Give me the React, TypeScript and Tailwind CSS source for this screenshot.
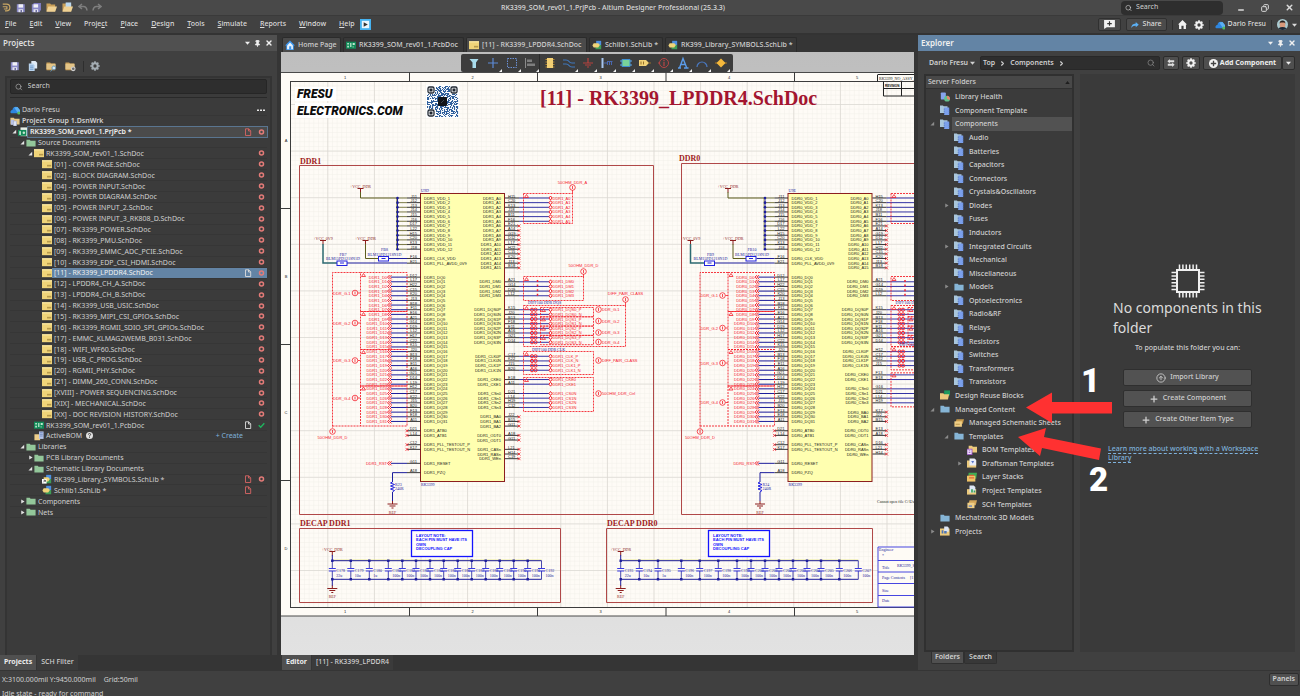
import React from 'react';
import { ArrowUpCircle, ChevronRight, Copy, Minus, Pin, Plus, Search, X } from 'lucide-react';

type IconKind =
  | 'cloud' | 'group' | 'pcbProject' | 'greenFolder' | 'sheet' | 'pcb' | 'bom' | 'schlib' | 'schlibLink'
  | 'health' | 'comp' | 'blueFolder' | 'reuse' | 'sheets' | 'bomTpl' | 'draftsman' | 'layers' | 'projTpl' | 'schTpl' | 'projects' | 'home';

type ProjectRow = {
  label: string;
  level: number;
  icon: IconKind;
  open?: boolean;
  doc?: 'red' | 'white';
  mark?: 'ring' | 'check' | 'dots';
  bold?: boolean;
  state?: 'focused' | 'selected';
};

const sheet = (label: string): ProjectRow => ({ label, level: 4, icon: 'sheet', mark: 'ring' });

const projectRows: ProjectRow[] = [
  { label: 'Dario Fresu', level: 0, icon: 'cloud', mark: 'dots' },
  { label: 'Project Group 1.DsnWrk', level: 0, icon: 'group', bold: true },
  { label: 'RK3399_SOM_rev01_1.PrjPcb *', level: 1, icon: 'pcbProject', open: true, doc: 'red', mark: 'ring', bold: true, state: 'focused' },
  { label: 'Source Documents', level: 2, icon: 'greenFolder', open: true },
  { label: 'RK3399_SOM_rev01_1.SchDoc', level: 3, icon: 'sheet', open: true, mark: 'ring' },
  sheet('[01] - COVER PAGE.SchDoc'),
  sheet('[02] - BLOCK DIAGRAM.SchDoc'),
  sheet('[04] - POWER INPUT.SchDoc'),
  sheet('[03] - POWER DIAGRAM.SchDoc'),
  sheet('[05] - POWER INPUT_2.SchDoc'),
  sheet('[06] - POWER INPUT_3_RK808_D.SchDoc'),
  sheet('[07] - RK3399_POWER.SchDoc'),
  sheet('[08] - RK3399_PMU.SchDoc'),
  sheet('[09] - RK3399_EMMC_ADC_PCIE.SchDoc'),
  sheet('[10] - RK3399_EDP_CSI_HDMI.SchDoc'),
  { ...sheet('[11] - RK3399_LPDDR4.SchDoc'), doc: 'white', state: 'selected' },
  sheet('[12] - LPDDR4_CH_A.SchDoc'),
  sheet('[13] - LPDDR4_CH_B.SchDoc'),
  sheet('[14] - RK3399_USB_USIC.SchDoc'),
  sheet('[15] - RK3399_MIPI_CSI_GPIOs.SchDoc'),
  sheet('[16] - RK3399_RGMII_SDIO_SPI_GPIOs.SchDoc'),
  sheet('[17] - EMMC_KLMAG2WEMB_B031.SchDoc'),
  sheet('[18] - WIFI_WF60.SchDoc'),
  sheet('[19] - USB_C_PROG.SchDoc'),
  sheet('[20] - RGMII_PHY.SchDoc'),
  sheet('[21] - DIMM_260_CONN.SchDoc'),
  sheet('[XVIII] - POWER SEQUENCING.SchDoc'),
  sheet('[XIX] - MECHANICAL.SchDoc'),
  sheet('[XX] - DOC REVISION HISTORY.SchDoc'),
  { label: 'RK3399_SOM_rev01_1.PcbDoc', level: 3, icon: 'pcb', doc: 'white', mark: 'check' },
  { label: 'ActiveBOM', level: 3, icon: 'bom' },
  { label: 'Libraries', level: 2, icon: 'greenFolder', open: true },
  { label: 'PCB Library Documents', level: 3, icon: 'greenFolder', open: false },
  { label: 'Schematic Library Documents', level: 3, icon: 'greenFolder', open: true },
  { label: 'RK399_Library_SYMBOLS.SchLib *', level: 4, icon: 'schlibLink', doc: 'red', mark: 'ring' },
  { label: 'Schlib1.SchLib *', level: 4, icon: 'schlib', doc: 'red' },
  { label: 'Components', level: 2, icon: 'greenFolder', open: false },
  { label: 'Nets', level: 2, icon: 'greenFolder', open: false },
];

type FolderRow = { label: string; level: number; icon: IconKind; open?: boolean; active?: boolean };

const comp = (label: string): FolderRow => ({ label, level: 1, icon: 'comp' });

const folderRows: FolderRow[] = [
  { label: 'Library Health', level: 0, icon: 'health' },
  { label: 'Component Template', level: 0, icon: 'comp' },
  { label: 'Components', level: 0, icon: 'comp', open: true, active: true },
  comp('Audio'),
  comp('Batteries'),
  comp('Capacitors'),
  comp('Connectors'),
  comp('Crystals&Oscillators'),
  { ...comp('Diodes'), open: false },
  comp('Fuses'),
  comp('Inductors'),
  { ...comp('Integrated Circuits'), open: false },
  comp('Mechanical'),
  comp('Miscellaneous'),
  { label: 'Models', level: 1, icon: 'blueFolder', open: false },
  comp('Optoelectronics'),
  comp('Radio&RF'),
  comp('Relays'),
  comp('Resistors'),
  comp('Switches'),
  comp('Transformers'),
  comp('Transistors'),
  { label: 'Design Reuse Blocks', level: 0, icon: 'reuse' },
  { label: 'Managed Content', level: 0, icon: 'blueFolder', open: true },
  { label: 'Managed Schematic Sheets', level: 1, icon: 'sheets' },
  { label: 'Templates', level: 1, icon: 'blueFolder', open: true },
  { label: 'BOM Templates', level: 2, icon: 'bomTpl' },
  { label: 'Draftsman Templates', level: 2, icon: 'draftsman', open: false },
  { label: 'Layer Stacks', level: 2, icon: 'layers' },
  { label: 'Project Templates', level: 2, icon: 'projTpl' },
  { label: 'SCH Templates', level: 2, icon: 'schTpl' },
  { label: 'Mechatronic 3D Models', level: 0, icon: 'blueFolder' },
  { label: 'Projects', level: 0, icon: 'projects', open: false },
];

/* ---------- small icons ---------- */

const folderPath = 'M0.5 2h4l1 1.2h6v7h-11z';

const TreeIcon = ({ kind }: { kind: IconKind }) => {
  const art: Record<IconKind, React.ReactNode> = {
    cloud: (
      <>
        <path d="M0.500 8.500c0-2 1.600-2.600 2.400-2.600C3.200 3.400 5 2 7 2c2.400 0 3.600 2 3.600 3.600 1 .3 1.400 1.400 1.400 2.200 0 1.400-1 2.200-2.200 2.200H2.200C1.200 10 .5 9.400.5 8.500z" fill="#2d86e0" />
        <path d="M5 3l4 6h3V6l-3-3.500z" fill="#5cb0f2" />
        <circle cx="10.500" cy="9.700" r="1.800" fill="#55b960" />
      </>
    ),
    group: (
      <>
        <path d={folderPath} fill="#e8c988" />
        <rect x="1" y="4.500" width="4" height="6" fill="#b9c2e6" />
        <rect x="4" y="6" width="4" height="6" fill="#dfe4f4" stroke="#8a93b5" strokeWidth=".5" />
      </>
    ),
    pcbProject: (
      <>
        <rect x="3" y="0.500" width="8.500" height="10.500" fill="#e8efe9" />
        <rect x="0" y="3.500" width="10" height="7" fill="#128a58" />
        <rect x="1.500" y="5" width="2" height="4.500" fill="#c5e6d2" />
        <circle cx="7" cy="7" r="1.500" fill="#c5e6d2" />
      </>
    ),
    greenFolder: <path d={folderPath} fill="#93c79a" />,
    sheet: (
      <>
        <rect x="0" y="1.500" width="12" height="9.500" fill="#f0d479" />
        <path d="M0 1.500h12v1.500H0z" fill="#f9e7a4" />
        <rect x="6" y="7" width="5" height="2" fill="#b79a4c" />
      </>
    ),
    pcb: (
      <>
        <rect x="0" y="2" width="12" height="8.500" fill="#128a58" />
        <path d="M1.500 3.500h2v2h-2zM1.500 7h2v2h-2zM5 3.500h1.500v5H5zM8 3.500h2.500v2.500H8zM8 7.500h1v1.500H8z" fill="#bfe8cf" />
      </>
    ),
    bom: (
      <>
        <path d="M0.500 4h6l1 7h-7z" fill="#eecf8b" />
        <rect x="6" y="0.500" width="5.500" height="9" fill="#b5c5ea" />
        <path d="M7 2h3.500M7 4h3.500M7 6h3.500" stroke="#5e77b0" strokeWidth=".8" />
      </>
    ),
    schlib: (
      <>
        <path d="M5 1h6v5H5z" fill="#4d8fe0" />
        <path d="M5 6h6v5H4z" fill="#3f9c57" />
        <path d="M2 4h5.500l2 2-2 3H2l-1.500-2.500z" fill="#f0d479" />
      </>
    ),
    schlibLink: (
      <>
        <path d="M5 1h6v5H5z" fill="#4d8fe0" />
        <path d="M5 6h6v5H4z" fill="#3f9c57" />
        <path d="M2 4h5.500l2 2-2 3H2z" fill="#f0d479" />
        <rect x="0" y="6" width="5.500" height="5.500" fill="#fff" />
        <path d="M1.500 10L4 7.500M2 7.500h2v2" stroke="#222" strokeWidth=".8" fill="none" />
      </>
    ),
    health: (
      <>
        <rect x="1" y="0.500" width="6" height="8.500" rx="1" fill="#86a4ec" />
        <circle cx="8.500" cy="8" r="3.500" fill="#63c18b" />
        <path d="M8.500 8V4.500A3.500 3.500 0 0 1 11.500 9.500z" fill="#ef7e6d" />
      </>
    ),
    comp: (
      <>
        <path d="M0 0.500h3.500l1 1H9v8H0z" fill="#a9c6dc" />
        <rect x="5" y="3" width="6" height="9" fill="#7ba0ec" />
        <path d="M4.500 5h1M4.500 7.500h1M4.500 10h1M10.500 5h1M10.500 7.500h1M10.500 10h1" stroke="#3d5fa5" strokeWidth="1" />
      </>
    ),
    blueFolder: <path d={folderPath} fill="#86b5d6" />,
    reuse: (
      <>
        <rect x="5" y="0.500" width="7" height="6" fill="#1e9a5e" />
        <path d="M0 4h4l1 1h6l-1.500 6.500H0z" fill="#ecca7c" />
      </>
    ),
    sheets: (
      <>
        <path d="M3 1.500h9l-1.500 5.500h-9z" fill="#c99b4c" />
        <path d="M0.500 4h9v6.500h-9z" fill="#f0cf86" />
        <path d="M2 7.500h5" stroke="#b08940" />
      </>
    ),
    bomTpl: (
      <>
        <path d="M2 1h4l1 1h5v7H2z" fill="#ecca7c" />
        <rect x="0" y="5" width="6" height="6.500" fill="#efe6fb" stroke="#9a50c5" strokeWidth="1" />
        <path d="M2 7h2M2 9h2" stroke="#9a50c5" />
      </>
    ),
    draftsman: (
      <>
        <path d="M0 3h11v8.500H0z" fill="#ecca7c" />
        <path d="M3 0.500h6l2 2V9H3z" fill="#e9edf8" />
        <path d="M5 3.500h3.500L7 6.500z" fill="#5874c8" />
      </>
    ),
    layers: (
      <>
        <path d="M2 1h10l-1 7H1z" fill="#3fae54" />
        <path d="M0 4.500h10v7H0z" fill="#efc266" />
        <path d="M2.500 4h6M2.500 7h6" stroke="#dd6a3a" strokeWidth="1.500" />
      </>
    ),
    projTpl: (
      <>
        <path d="M0 5h11v6.500H0z" fill="#ecca7c" />
        <path d="M3 0.500h5l2 2V9H3z" fill="#dde6f4" />
        <path d="M5 9V5h2v4zM8 9V6.500h2V9z" fill="#3aa35a" />
      </>
    ),
    schTpl: (
      <>
        <path d="M3 1.500h9l-1.500 6h-9z" fill="#d3a65a" />
        <path d="M0.500 4.500h8.500v6.500H0.500z" fill="#f0cf86" />
        <path d="M2 8.500h4" stroke="#5478c5" strokeWidth="1.500" />
      </>
    ),
    projects: (
      <>
        <path d="M0 3h11.500v8.500H0z" fill="#ecca7c" />
        <path d="M5 0.500h4l1.500 1.500V7H5z" fill="#dde6f4" />
        <path d="M2 5h2v4H2zM5 6h3v3H5z" fill="#4d75b8" />
      </>
    ),
    home: (
      <>
        <path d="M6 0.500L0 6.500h1.500V12h9V6.500H12z" fill="#3c97ef" />
        <path d="M6 3L2.500 6.500V11h7V6.500z" fill="#e9f3fd" />
        <rect x="5" y="7.500" width="2.500" height="4" fill="#3c97ef" />
      </>
    ),
  };
  return (
    <svg viewBox="0 0 12 12" className="size-[10px] shrink-0" aria-hidden="true">
      {art[kind]}
    </svg>
  );
};

const Twisty = ({ open, dim }: { open?: boolean; dim?: boolean }) => (
  <svg viewBox="0 0 6 6" className="size-[5px] shrink-0" aria-hidden="true">
    {open === true && <path d="M5 1v4.500H.5z" fill={dim ? '#8c8c8c' : '#e4e4e4'} />}
    {open === false && <path d="M1.500 0.500L5.500 3 1.500 5.500z" fill={dim ? '#8c8c8c' : '#e4e4e4'} />}
  </svg>
);

const Caret = () => (
  <svg viewBox="0 0 6 4" className="w-[5px] h-[4px] shrink-0" aria-hidden="true">
    <path d="M0 .5h6L3 4z" fill="currentColor" />
  </svg>
);

const Gear = ({ color = '#f2f2f2' }: { color?: string }) => (
  <svg viewBox="0 0 12 12" className="size-[10px]" fill="none" stroke={color} aria-hidden="true">
    <circle cx="6" cy="6" r="3.200" strokeWidth="2.400" />
    <path d="M6 .3v2M6 9.700v2M.3 6h2M9.700 6h2M2 2l1.400 1.400M8.600 8.600L10 10M2 10l1.400-1.400M8.600 3.400L10 2" strokeWidth="2" />
  </svg>
);

const DocMark = ({ tone }: { tone?: 'red' | 'white' }) => (
  <svg viewBox="0 0 8 8" className="size-[8px] shrink-0" aria-hidden="true">
    {tone && <path d="M1.500.8h3.200l2 2v4.700H1.500zM4.500.8v2.200h2" fill="none" stroke={tone === 'red' ? '#d66463' : '#dcdcdc'} strokeWidth=".9" />}
  </svg>
);

const StateMark = ({ mark }: { mark?: ProjectRow['mark'] }) => (
  <svg viewBox="0 0 8 8" className="size-[8px] shrink-0" aria-hidden="true">
    {mark === 'ring' && <circle cx="4.500" cy="4" r="2" fill="none" stroke="#e47b78" strokeWidth="1.500" />}
    {mark === 'check' && <path d="M1.700 4.200l2 2 3.600-3.900" fill="none" stroke="#1fb45e" strokeWidth="1.400" />}
    {mark === 'dots' && <path d="M0 3.500h2v1.400H0zM3 3.500h2v1.400H3zM6 3.500h2v1.400H6z" fill="#e6e6e6" />}
  </svg>
);

const SaveIcon = ({ stacked }: { stacked?: boolean }) => (
  <svg viewBox="0 0 12 12" className="size-[10px]" aria-hidden="true">
    {stacked && <path d="M3 0h9v9H3z" fill="#7f7cc0" />}
    <path d="M1 1.500h9.500V11H1z" fill="#8b8bc8" />
    <path d="M3 1.500h5.500v4H3z" fill="#f1f1f6" />
    <path d="M3 7.500h5.500V11H3z" fill="#e4e4ee" />
    <path d="M5.500 8.500h1.500V11H5.500z" fill="#55558e" />
  </svg>
);

const OpenFolderIcon = ({ badge }: { badge?: 'page' | 'search' | 'gear' }) => (
  <svg viewBox="0 0 12 12" className="size-[11px]" aria-hidden="true">
    <path d="M0.500 1.500h4l1 1.200H10V10H0.500z" fill="#c99f58" />
    {badge === 'page' && <path d="M4 0.500h6v6H4z" fill="#bcd8ee" />}
    {(badge === undefined || badge === 'page') && <path d="M2.500 5H12l-2 5.500H0.500z" fill="#efd193" />}
    {(badge === 'search' || badge === 'gear') && <path d="M0.500 3h10v6h-10z" fill="#e3c487" />}
    {badge === 'search' && <path d="M8.500 5.500a2 2 0 1 0 .1 0zM7 9l-2 2.500" fill="#d3e8f7" stroke="#5d8fb5" strokeWidth="1" />}
    {badge === 'gear' && <circle cx="9" cy="8.500" r="2" fill="#6a6a6a" stroke="#cfcfcf" strokeWidth="1.200" />}
  </svg>
);

const PanelHeader = ({ title, active }: { title: string; active?: boolean }) => (
  <header className={`flex h-4 shrink-0 items-center justify-between pr-1 pl-[3px] text-[8px] font-semibold ${active ? 'bg-[#6384a5] text-[#f0f0f0]' : 'bg-[#505050] text-[#dedede]'}`}>
    <h2>{title}</h2>
    <div className="flex items-center gap-1 text-[#f0f0f0]">
      <button type="button" aria-label="Panel menu"><Caret /></button>
      <button type="button" aria-label="Pin panel"><Pin size={7} strokeWidth={3} fill="currentColor" /></button>
      <button type="button" aria-label="Close panel"><X size={8} strokeWidth={4} /></button>
    </div>
  </header>
);

/* ---------- top bars ---------- */

const menuItems = ['File', 'Edit', 'View', 'Project', 'Place', 'Design', 'Tools', 'Simulate', 'Reports', 'Window', 'Help'];
// index of the underlined access key in each entry
const accessKey = [0, 0, 0, 5, 0, 0, 0, 0, 0, 0, 0];

const TitleBar = () => (
  <div className="flex h-[15px] shrink-0 items-center bg-[#494949] text-[#dadada]">
    <div className="flex w-[105px] items-center gap-[5px] pl-[2px]">
      <svg viewBox="0 0 12 12" className="size-[9px]" aria-hidden="true">
        <path d="M1 1.500h5a4.500 4.500 0 0 1 0 9H4M1 5h5.500v3H2.500" fill="none" stroke="#c9a764" strokeWidth="1.600" />
      </svg>
      <button type="button" aria-label="Save"><SaveIcon /></button>
      <button type="button" aria-label="Save all"><SaveIcon stacked /></button>
      <button type="button" aria-label="Open"><OpenFolderIcon /></button>
      <button type="button" aria-label="Open project"><OpenFolderIcon badge="page" /></button>
      <svg viewBox="0 0 24 10" className="h-[10px] w-[24px]" fill="none" stroke="#7e7e7e" strokeWidth="1.500" aria-hidden="true">
        <path d="M4 1L1 3.500 4 6M1 3.500h4.500q3 0 3.500 4M20 1l3 2.500L20 6M23 3.500h-4.500q-3 0-3.500 4" />
      </svg>
    </div>
    <h1 className="flex-1 pt-px text-center text-[7px] font-medium">RK3399_SOM_rev01_1.PrjPcb - Altium Designer Professional (25.3.3)</h1>
    <label className="flex h-[14px] w-[102px] items-center gap-1 rounded-sm bg-[#2e2e2e] px-1">
      <Search size={8} />
      <input aria-label="Search" placeholder="Search" className="w-full bg-transparent text-[7px] outline-none placeholder:text-[#cfcfcf]" />
    </label>
    <div className="flex w-[77px] items-center justify-end gap-[16px] pr-[6px]">
      <button type="button" aria-label="Minimize" className="pt-1"><Minus size={8} strokeWidth={4} /></button>
      <button type="button" aria-label="Restore"><Copy size={8} strokeWidth={3} className="-scale-x-100" /></button>
      <button type="button" aria-label="Close"><X size={9} strokeWidth={4} /></button>
    </div>
  </div>
);

const MenuBar = () => (
  <div className="flex h-[20px] shrink-0 items-center justify-between border-t border-b-2 border-t-[#3a3a3a] border-b-[#333333] bg-[#414141] text-[#dcdcdc]">
    <nav className="flex items-center gap-[13px] pl-[5px] text-[7px] font-medium">
      {menuItems.map((item, i) => (
        <button key={item} type="button">
          {item.slice(0, accessKey[i])}
          <span className="underline">{item[accessKey[i]]}</span>
          {item.slice(accessKey[i] + 1)}
        </button>
      ))}
      <svg viewBox="0 0 12 12" className="-ml-2 size-[11px]" aria-hidden="true">
        <rect width="12" height="12" fill="#45b2f0" />
        <rect x="2" y="2" width="8" height="8" fill="#eaf6fd" />
        <path d="M4 3.500L8.500 6 4 8.500z" fill="#333" />
      </svg>
    </nav>
    <div className="flex items-center gap-[5px] pr-[3px] text-[7px] font-medium">
      <button type="button" aria-label="Add comment" className="flex h-[13px] w-[23px] items-center justify-center rounded-xs border border-[#303030] bg-[#4b4b4b]">
        <svg viewBox="0 0 12 10" className="h-[9px] w-[11px]" aria-hidden="true">
          <path d="M0 0h12v8H3L0 10z" fill="#f2f2f2" />
          <path d="M6 1.500v5M3.500 4h5" stroke="#333" strokeWidth="1.300" />
        </svg>
      </button>
      <button type="button" className="flex h-[13px] w-[41px] items-center justify-center gap-1 rounded-xs border border-[#303030] bg-[#4b4b4b]">
        <svg viewBox="0 0 10 8" className="h-[6px] w-[8px]" aria-hidden="true">
          <path d="M6 0l4 3.500L6 7V5Q2 4.500 0 8 0 2.500 6 2z" fill="#5bb0f5" />
        </svg>
        Share
      </button>
      <span className="h-[10px] border-l border-[#2e2e2e]" />
      <button type="button" aria-label="Home">
        <svg viewBox="0 0 10 10" className="size-[9px]" aria-hidden="true"><path d="M5 0L0 5h1.200v5h2.600V6.500h2.400V10h2.600V5H10z" fill="#f2f2f2" /></svg>
      </button>
      <button type="button" aria-label="Preferences" className="ml-[2px]"><Gear /></button>
      <span className="h-[10px] border-l border-[#2e2e2e]" />
      <button type="button" className="flex items-center gap-[3px]"><TreeIcon kind="cloud" />Dario Fresu</button>
      <span className="h-[10px] border-l border-[#2e2e2e]" />
      <button type="button" aria-label="Account" className="flex items-center gap-1">
        <svg viewBox="0 0 12 12" className="size-[11px]" aria-hidden="true">
          <circle cx="6" cy="6" r="6" fill="#a9c9cf" />
          <path d="M3 5a3 3 0 0 1 6 0v2a3 3 0 0 1-6 0z" fill="#d8997b" />
          <path d="M2.800 5Q3 1.500 6 1.500T9.200 5L8 3.800H4z" fill="#26201e" />
          <path d="M1.500 10Q6 7.500 10.500 10 6 14 1.500 10z" fill="#1d2836" />
        </svg>
        <Caret />
      </button>
    </div>
  </div>
);

/* ---------- projects panel ---------- */

const projectIndent = ['', 'pl-0', 'pl-2', 'pl-4', 'pl-6'];

const ProjectsPanel = () => (
  <aside className="flex w-[277px] shrink-0 flex-col bg-[#404040]">
    <PanelHeader title="Projects" />
    <div className="flex h-[25px] shrink-0 items-center gap-[8px] pt-[5px] pl-[10px]">
      <button type="button" aria-label="Save"><SaveIcon /></button>
      <button type="button" aria-label="Compile">
        <svg viewBox="0 0 12 12" className="size-[10px]" aria-hidden="true">
          <path d="M4 0h5l2 2v7H4z" fill="#e0eaf5" />
          <path d="M1 3h5l2 2v7H1z" fill="#b8d3ee" />
          <path d="M2.500 6h4M2.500 8h4M2.500 10h4" stroke="#5687c0" strokeWidth=".8" />
        </svg>
      </button>
      <button type="button" aria-label="Explore"><OpenFolderIcon badge="search" /></button>
      <button type="button" aria-label="Project options"><OpenFolderIcon badge="gear" /></button>
      <span className="-mx-px h-[11px] border-l border-[#2e2e2e]" />
      <button type="button" aria-label="Settings" className="-ml-px"><Gear color="#a4adb3" /></button>
    </div>
    <div className="mr-[5px] ml-[5px] flex flex-1 flex-col border-2 border-b-0 border-[#343434] bg-[#3b3b3b] px-[3px]">
      <label className="mt-px flex h-[15px] shrink-0 items-center gap-[5px] rounded-xs border border-[#262626] bg-[#2e2e2e] px-1">
        <Search size={8} color="#b5b5b5" />
        <input aria-label="Search projects" placeholder="Search" className="w-full bg-transparent text-[7px] outline-none placeholder:text-[#cfcfcf]" />
      </label>
      <div className="mt-[3px] border-t border-[#292929]" />
      <ul role="tree" aria-label="Projects" className="mt-[7px] grid h-[413px] auto-rows-fr">
        {projectRows.map((row) => (
          <li key={row.label} role="treeitem" aria-selected={row.state === 'selected'} className={`flex items-center border-b border-[#363636] ${projectIndent[row.level]}`}>
            {row.level > 0 && <span className="flex w-2 shrink-0 justify-center"><Twisty open={row.open} /></span>}
            <TreeIcon kind={row.icon} />
            <span
              className={`flex h-full min-w-0 flex-1 items-center gap-1 px-[2px] leading-none whitespace-nowrap ${row.bold ? 'font-semibold' : ''} ${
                row.state === 'selected' ? 'bg-[#6384a5] text-[#f0f0f0]' : row.state === 'focused' ? 'bg-[#4b4b4b] text-[#f0f0f0] outline outline-[#5a7590]' : ''
              }`}
            >
              <span>{row.label}</span>
              {row.label === 'ActiveBOM' && (
                <>
                  <svg viewBox="0 0 8 8" className="size-[7px]" aria-hidden="true">
                    <circle cx="4" cy="4" r="4" fill="#e2e2e2" />
                    <path d="M2.700 3q0-1.300 1.300-1.300T5.300 3Q5.300 3.800 4 4.300v.7M4 5.600v1" fill="none" stroke="#333" />
                  </svg>
                  <button type="button" className="mr-[22px] ml-auto text-[#7fb2dc]">+ Create</button>
                </>
              )}
              {row.label !== 'ActiveBOM' && (
                <span className="ml-auto flex gap-[5px]">
                  <DocMark tone={row.doc} />
                  <StateMark mark={row.mark} />
                </span>
              )}
            </span>
          </li>
        ))}
      </ul>
    </div>
    <div className="flex h-[15px] shrink-0 gap-px bg-[#353535] text-[7px]">
      <button type="button" className="bg-[#505050] px-1 font-bold text-[#ececec]">Projects</button>
      <button type="button" className="bg-[#3b3b3b] px-1 font-medium">SCH Filter</button>
    </div>
  </aside>
);

/* ---------- schematic ---------- */

const U = 4.655; // pin pitch
const pinY = (k: number) => 198 + k * U;
const RED = '#f5222d';
const WIRE = '#1d1d9c';
const MAROON = '#8c1f1f';

const range = (n: number) => Array.from({ length: n }, (_, i) => i);

const Tag = ({ x, y, children, fill = '#1c1c1c', end, mid, serif }: {
  x: number; y: number; children: React.ReactNode; fill?: string; end?: boolean; mid?: boolean; serif?: boolean;
}) => (
  <text x={x} y={y + 1.5} fill={fill} textAnchor={end ? 'end' : mid ? 'middle' : 'start'} className={serif ? "font-['Liberation_Serif',serif] text-[4px]" : "font-['Liberation_Sans',sans-serif] text-[4px]"}>
    {children}
  </text>
);

const Power = ({ x, y, name }: { x: number; y: number; name: string }) => (
  <g stroke={MAROON} fill="none">
    <path d={`M${x - 3} ${y}h6M${x} ${y}v4`} />
    <g stroke="none"><Tag x={x} y={y - 2.5} mid serif fill={MAROON}>{name}</Tag></g>
  </g>
);

const Ground = ({ x, y }: { x: number; y: number }) => (
  <g stroke={MAROON}>
    <path d={`M${x} ${y - 3}v3M${x - 5} ${y}h10M${x - 3} ${y + 2}h6M${x - 1} ${y + 4}h2`} />
    <g stroke="none"><Tag x={x} y={y + 8} mid serif fill={MAROON}>REF</Tag></g>
  </g>
);

const Directive = ({ x, y }: { x: number; y: number }) => (
  <g fill="none" stroke={RED} strokeWidth=".8">
    <circle cx={x} cy={y} r="2.800" />
    <path d={`M${x} ${y - 1.5}v3`} />
  </g>
);

const Dashed = ({ x, y, w, h }: { x: number; y: number; w: number; h: number }) => (
  <>
    <rect x={x} y={y} width={w} height={h} fill="none" stroke={RED} strokeWidth=".9" strokeDasharray="2 1" />
    <path d={`M${x + 1} ${y + 4}l2-3 2 3z`} fill="none" stroke={RED} strokeWidth=".8" />
  </>
);

const Ferrite = ({ x, y, name }: { x: number; y: number; name: string }) => (
  <>
    <rect x={x - 5} y={y - 2} width="10" height="4.500" fill="#fffdf8" stroke="#2222e0" />
    <path d={`M${x - 2} ${y}h4`} stroke="#2222e0" />
    <Tag x={x + 1} y={y - 9} mid serif fill="#22229c">{name}</Tag>
    <Tag x={x + 1} y={y - 4.5} mid serif fill="#22229c">BLM15PD121SN1D</Tag>
  </>
);

type BankProps = { id: 0 | 1; dx: number; shift: number; ref1: string; res: string; groupY: number[]; beads: [string, string] };

const pinCols = ['J', 'H', 'G', 'F', 'K', 'L', 'A', 'B', 'C', 'D', 'E'];
const pinNo = (k: number) => {
  if (k < 6) return `J${11 + k}`;
  if (k === 57) return 'G11';
  return `${pinCols[(k * 7) % 11]}${11 + ((k * 5) % 12)}`;
};
const sepY = [272.5, 311.5, 349.5, 386, 426];

const DdrBank = ({ id, dx, shift, ref1, res, groupY, beads }: BankProps) => {
  const p = `DDR${id}_`;
  const left: [number, string][] = [
    ...range(12).map((i): [number, string] => [i, `VDD_${i + 1}`]),
    [13, 'CLK_VDD'], [14, 'PLL_AVDD_0V9'],
    ...range(32).map((i): [number, string] => [17 + i, `DQ${i}`]),
    [50, 'ATB0'], [51, 'ATB1'], [53, 'PLL_TESTOUT_P'], [54, 'PLL_TESTOUT_N'], [57, 'RESET'], [59, 'PZQ'],
  ];
  const s = shift;
  const right: [number, string][] = [
    ...range(16).map((i): [number, string] => [i, `A${i}`]),
    ...range(4).map((i): [number, string] => [18 + i, `DM${i}`]),
    ...range(8).map((i): [number, string] => [24 + i, `DQS${i >> 1}${i % 2 ? 'N' : 'P'}`]),
    [34 + s, 'CLK0P'], [35 + s, 'CLK0N'], [36 + s, 'CLK1P'], [37 + s, 'CLK1N'],
    [39 + s, 'CKE0'], [40 + s, 'CKE1'],
    ...range(4).map((i): [number, string] => [42 + s + i, `CSn${i}`]),
    ...range(3).map((i): [number, string] => [47 + s + i, `BA${i}`]),
    [51 + s, 'ODT0'], [52 + s, 'ODT1'], [54 + s, 'CASn'], [55 + s, 'RASn'], [56 + s, 'WEn'],
  ];
  const nets: [number, string][] = [
    ...range(6).map((i): [number, string] => [i, `A${i}`]),
    ...range(4).map((i): [number, string] => [18 + i, `DM${i}`]),
    ...range(8).map((i): [number, string] => [24 + i, `DQS${i >> 1}_${i % 2 ? 'N' : 'P'}`]),
    [34 + s, 'CLK_P'], [35 + s, 'CLK_N'], [36 + s, 'CLK1_P'], [37 + s, 'CLK1_N'],
    [39 + s, 'CKE0'], [40 + s, 'CKE1'],
    ...range(4).map((i): [number, string] => [42 + s + i, `CS${i}N`]),
  ];
  const unconnected = [6, 7, 8, 9, 10, 11, 12, 13, 14, 15, 47 + s, 48 + s, 49 + s, 51 + s, 52 + s, 54 + s, 55 + s, 56 + s];

  return (
    <g transform={`translate(${dx} 0)`}>
      {/* supply rails */}
      <Power x={360.5} y={188.5} name="+VCC_DDR" />
      <Power x={323} y={240.5} name="+VCC_0V9" />
      <Power x={365.5} y={240.5} name="+VCC_DDR" />
      <path d="M360.500 192v6h37M365.500 244v14.500h13" fill="none" stroke="#5d5d1c" />
      <path d="M323 244v19h14" fill="none" stroke="#2c6a72" strokeWidth="1.500" />
      <path d="M397.500 198v51M347 263h60M389 258.500h18" stroke={WIRE} />
      <path d="M396.500 198v51" stroke="#8a8a30" strokeWidth=".7" />
      <Ferrite x={342} y={263} name={beads[0]} />
      <Ferrite x={383.5} y={258.5} name={beads[1]} />
      {range(12).map((i) => (
        <g key={i}>
          <path d={`M397 ${pinY(i)}h10`} stroke="#5d5d1c" strokeWidth=".8" />
          <circle cx="397.500" cy={pinY(i)} r="1.300" fill={WIRE} />
        </g>
      ))}

      {/* chip body */}
      <rect x="420.500" y="193.500" width="84" height="288" fill="#ffffb0" stroke={MAROON} />
      <Tag x={421} y={190.5} serif fill="#22229c">{ref1}</Tag>
      <Tag x={421} y={484.5} serif fill="#22229c">RK3399</Tag>
      {left.map(([k, name]) => (
        <g key={name}>
          <path d={`M407 ${pinY(k)}h13.500`} stroke="#222" strokeWidth=".9" />
          <Tag x={424} y={pinY(k)}>{p + name}</Tag>
          <Tag x={417} y={pinY(k) - 2} end>{pinNo(k)}</Tag>
        </g>
      ))}
      {right.map(([k, name]) => (
        <g key={name}>
          <path d={`M505 ${pinY(k)}h14`} stroke="#222" strokeWidth=".9" />
          <Tag x={501} y={pinY(k)} end>{p + name}</Tag>
          <Tag x={508} y={pinY(k) - 2}>{pinNo(k + 8)}</Tag>
        </g>
      ))}

      {/* data nets on the left */}
      {range(32).map((i) => (
        <g key={i}>
          <path d={`M391 ${pinY(17 + i)}h16`} stroke={WIRE} />
          <path d={`M391.500 ${pinY(17 + i) - 2}l-2 2 2 2M389.500 ${pinY(17 + i) - 2}l-2 2 2 2`} fill="none" stroke={RED} />
          <Tag x={387} y={pinY(17 + i)} end fill={RED}>{`${p}D${i}`}</Tag>
        </g>
      ))}
      <path d="M360.500 272.500h-28V428" fill="none" stroke={RED} strokeWidth=".9" strokeDasharray="2 1" />
      <path d="M332.500 426h28" stroke={RED} strokeWidth=".9" strokeDasharray="2 1" />
      {sepY.slice(0, 4).map((y, i) => (
        <Dashed key={y} x={360.5} y={y} w={46.5} h={sepY[i + 1] - y} />
      ))}
      {groupY.map((y, i) => (
        <g key={y}>
          <Tag x={333} y={y} fill={RED}>{`DDR_G-${i + 1}`}</Tag>
          <Directive x={355} y={y} />
          <path d={`M358 ${y}h2.500`} stroke={RED} strokeWidth=".8" />
        </g>
      ))}
      <Directive x={332.5} y={431.5} />
      <Tag x={332.5} y={437} mid fill={RED}>50OHM_DDR_D</Tag>

      {/* nets on the right */}
      {nets.map(([k, name]) => (
        <g key={name}>
          <path d={`M519 ${pinY(k)}h30`} stroke={WIRE} strokeWidth=".9" />
          <path d={`M549 ${pinY(k)}l1.500-2 1.500 2-1.500 2z`} fill="#fff" stroke={RED} />
          <Tag x={552.5} y={pinY(k)} fill={RED}>{p + name}</Tag>
        </g>
      ))}
      {unconnected.map((k) => (
        <path key={k} d={`M517.500 ${pinY(k) - 1.5}l3 3M520.500 ${pinY(k) - 1.5}l-3 3`} stroke={RED} strokeWidth=".8" />
      ))}
      {[50, 51, 53, 54].map((k) => (
        <path key={k} d={`M405.500 ${pinY(k) - 1.5}l3 3M408.500 ${pinY(k) - 1.5}l-3 3`} stroke={RED} strokeWidth=".8" />
      ))}
      <Dashed x={523.5} y={193.5} w={49} h={30} />
      <Dashed x={523.5} y={276.5} w={60} h={24} />
      <Dashed x={523.5} y={305.5} w={102} h={41} />
      {range(4).map((i) => (
        <Dashed key={i} x={540.5} y={307.5 + i * 9.3} w={53} h={9.3} />
      ))}
      <Dashed x={523.5} y={351.5 + s * U} w={70} h={23} />
      <Dashed x={523.5} y={377.5 + s * U} w={70} h={34} />
      {/* differential pair markers */}
      {[24, 25, 26, 27, 28, 29, 30, 31, 34 + s, 35 + s, 36 + s, 37 + s].map((k) => (
        <g key={k} fill="none" stroke={RED}>
          <circle cx="532" cy={pinY(k)} r="1.600" />
          <circle cx="535.500" cy={pinY(k)} r="1.600" />
        </g>
      ))}
      <path d="M537.500 280v17" stroke={RED} strokeWidth="1.500" strokeDasharray="2 2.600" />
      <Directive x={572.5} y={187.5} />
      <Tag x={572.5} y={182} mid fill={RED}>50OHM_DDR_A</Tag>
      <path d="M572.500 190v4M583.500 274v3M625.500 302v4" stroke={RED} strokeWidth=".8" />
      <Directive x={583.5} y={271.5} />
      <Tag x={583.5} y={265.5} mid fill={RED}>50OHM_DDR_D</Tag>
      <Directive x={625.5} y={299.5} />
      <Tag x={625.5} y={293.5} mid fill={RED}>DIFF_PAIR_CLASS</Tag>
      <Tag x={528} y={302.5} serif fill="#22229c">DIFF100 DDR DQS</Tag>
      <Tag x={532} y={349 + s * U} serif fill="#22229c">DIFF100 DDR CLK</Tag>
      {[309.5, 321, 332.5, 342].map((y, i) => (
        <g key={y}>
          <Directive x={598.5} y={y} />
          <Tag x={602} y={y} fill={RED}>{`DDR_G-${i + 1}`}</Tag>
        </g>
      ))}
      <Directive x={598.5} y={360.5} />
      <Tag x={602} y={360.5} fill={RED}>DIFF_PAIR_CLASS</Tag>
      <Directive x={598.5} y={393.5} />
      <Tag x={602} y={393.5} fill={RED}>50OHM_DDR_Ctrl</Tag>

      {/* reset and calibration resistor */}
      <path d={`M391 ${pinY(57)}h16M407 ${pinY(59)}h-14.500V482M392.500 492v9`} fill="none" stroke={WIRE} />
      <path d={`M391.500 ${pinY(57) - 2}l-2 2 2 2M389.500 ${pinY(57) - 2}l-2 2 2 2`} fill="none" stroke={RED} />
      <Tag x={387} y={pinY(57)} end fill={RED}>{`${p}RST`}</Tag>
      <path d="M392.500 482l-2 1 4 1.500-4 1.500 4 1.500-4 1.500 4 1.500-2 1.500" fill="none" stroke="#2222e0" />
      <Tag x={395} y={484} serif fill="#22229c">{res}</Tag>
      <Tag x={395} y={488.5} serif fill="#22229c">240R</Tag>
      <Ground x={392.5} y={504} />
    </g>
  );
};

const Decaps = ({ xs, first, noteX }: { xs: number[]; first: number; noteX: number }) => {
  const start = xs[0];
  const end = xs[xs.length - 1];
  return (
    <g>
      <path d={`M${start} 560h${end - start}`} stroke="#dede50" strokeWidth=".6" />
      <path d={`M${start} 560.700H${end}M${start} 579.300H${end}`} stroke={WIRE} />
      {xs.map((x, i) => (
        <g key={x}>
          <path d={`M${x} 560.700v7.500M${x} 571v8.300`} stroke={WIRE} strokeWidth=".8" />
          <path d={`M${x - 3.5} 568.500h7M${x - 3.5} 571h7`} stroke="#2222e0" strokeWidth=".9" />
          {i < xs.length - 1 && <path d={`M${x - 1.2} 559.500h2.400v2.400h-2.400zM${x - 1.2} 578h2.400v2.400h-2.400z`} fill={WIRE} />}
          <Tag x={x + 4} y={570} serif fill="#22229c">{`C${first + i}`}</Tag>
          <Tag x={x + 4} y={575} serif fill="#22229c">{['22u', '10u', '1u'][i] ?? '100n'}</Tag>
        </g>
      ))}
      <Power x={start} y={551.5} name="+VCC_DDR" />
      <path d={`M${start} 555v6M${start} 579v7`} stroke={WIRE} />
      <Ground x={start} y={588.5} />
      <rect x={noteX} y="530.500" width="61" height="26" fill="#fffdfa" stroke="#1414ff" strokeWidth="1.300" />
      <text x={noteX + 4.5} y="536.500" fill="#1414ff" className="font-['Liberation_Sans',sans-serif] text-[4px] font-bold">
        <tspan>LAYOUT NOTE:</tspan>
        <tspan x={noteX + 4.5} dy="4.600">EACH PIN MUST HAVE ITS</tspan>
        <tspan x={noteX + 4.5} dy="4.600">OWN</tspan>
        <tspan x={noteX + 4.5} dy="4.600">DECOUPLING CAP</tspan>
      </text>
    </g>
  );
};

const QrCode = () => {
  const finder = [[0, 0], [23, 0], [0, 23]];
  const cells: string[] = [];
  let seed = 7;
  for (let r = 0; r < 31; r++) {
    for (let c = 0; c < 31; c++) {
      seed = (seed * 1103515245 + 12345) % 2147483648;
      const inFinder = finder.some(([x, y]) => c >= x && c < x + 8 && r >= y && r < y + 8);
      if (!inFinder && (seed >> 16) % 2 === 0) cells.push(`M${427 + c} ${86 + r}h1.100v1.100h-1.100z`);
    }
  }
  return (
    <g>
      <rect x="426" y="85" width="33" height="33" fill="#fff" />
      <path d={cells.join('')} fill="#2f5f9c" />
      {finder.map(([x, y]) => (
        <g key={`${x}-${y}`}>
          <rect x={428 + x} y={87 + y} width="6" height="6" rx="1.500" fill="#fff" stroke="#1f2630" strokeWidth="1.300" />
          <rect x={429.5 + x} y={88.5 + y} width="3" height="3" fill="#1f2630" />
        </g>
      ))}
      <rect x="438" y="97" width="9" height="9" rx="1" fill="#10141a" />
      <path d="M441 103l3-3" stroke="#4c5560" strokeWidth=".8" />
    </g>
  );
};

const Schematic = () => (
  <svg viewBox="281 52 633 603" className="h-[603px] w-[633px] max-w-none" role="img" aria-label="RK3399_LPDDR4 schematic sheet">
    <defs>
      <linearGradient id="desk" x1="0" y1="0" x2="0" y2="1">
        <stop offset="0" stopColor="#bebebe" />
        <stop offset="1" stopColor="#e2e2e2" />
      </linearGradient>
      <pattern id="minor" x="280.700" y="104" width="4.660" height="4.660" patternUnits="userSpaceOnUse">
        <path d="M0 0H4.660M0 0V4.660" stroke="#f0ede7" strokeWidth=".9" />
      </pattern>
      <pattern id="major" x="280.700" y="104" width="46.600" height="46.600" patternUnits="userSpaceOnUse">
        <path d="M0 0H46.600M0 0V46.600" stroke="#dcd9d3" strokeWidth="1.600" />
      </pattern>
    </defs>
    <rect x="281" y="52" width="633" height="603" fill="url(#desk)" />
    <rect x="280" y="72.500" width="640" height="543.500" fill="#fefbf6" stroke="#4a4a4a" />
    <rect x="290.500" y="81.500" width="640" height="526" fill="url(#minor)" />
    <rect x="290.500" y="81.500" width="640" height="526" fill="url(#major)" stroke="#3c3c3c" />
    <path d="M409.500 72v9.500M537.500 72v9.500M666 72v9.500M794.500 72v9.500M409.500 607v9M537.500 607v9M666 607v9M794.500 607v9M281 208.500h9.500M281 344.500h9.500M281 480.500h9.500" stroke="#3c3c3c" />
    {[345, 472.5, 600.5, 729, 857].map((x, i) => (
      <g key={x}>
        <Tag x={x} y={77} mid>{i + 1}</Tag>
        <Tag x={x} y={611.5} mid>{i + 1}</Tag>
      </g>
    ))}
    {['A', 'B', 'C', 'D'].map((l, i) => <Tag key={l} x={286} y={140 + i * 136} mid>{l}</Tag>)}

    <path d="M295 87h41v14h-41zM295 103h105v15H295z" fill="#fff" />
    <text fill="#0d0d0d" className="font-['Roboto',sans-serif] text-[12px] font-black italic">
      <tspan x="297" y="98">FRESU</tspan>
      <tspan x="297" y="115">ELECTRONICS.COM</tspan>
    </text>
    <QrCode />
    <text x="540" y="105" fill="#a3152f" className="font-['Liberation_Serif',serif] text-[20px] font-bold">[11] - RK3399_LPDDR4.SchDoc</text>

    <g fill="#a01c1c" className="font-['Liberation_Serif',serif] text-[8px] font-bold">
      <text x="300" y="164">DDR1</text>
      <text x="679" y="161">DDR0</text>
      <text x="300" y="526">DECAP DDR1</text>
      <text x="607" y="526">DECAP DDR0</text>
    </g>
    <path d="M299.500 165.500h354v349h-354zM681.500 163.500h240v351h-240zM299.500 528.500h261v74h-261zM606.500 528.500h266v74h-266z" fill="none" stroke="#b04848" />

    <DdrBank id={1} dx={0} shift={0} ref1="U9D" res="R23" groupY={[293, 323, 360.5, 398]} beads={['FB7', 'FB8']} />
    <DdrBank id={0} dx={367.5} shift={-1} ref1="U9E" res="R24" groupY={[295.5, 328, 363, 402.5]} beads={['FB9', 'FB10']} />

    <Decaps first={178} noteX={411.5} xs={[332.3, 350.8, 369.3, 388.3, 402.3, 416, 430, 443.7, 457.7, 471.7, 485.7, 499.7, 513.7, 527.7, 541.5]} />
    <Decaps first={193} noteX={708.5} xs={[620.7, 639.3, 658, 681.3, 699.7, 718.3, 737, 751, 765, 779, 793, 807, 821, 839.3, 858.3]} />

    {/* revision table and title block */}
    <path d="M877.500 75v6.500M877.500 74.500h40M883.500 81.500v14.500M901.500 81.500v14.500M883.500 88.500h34M883.500 96h34" fill="none" stroke="#222" />
    <Tag x={879} y={78} serif>RK3399_NO_ASSY_PARTS</Tag>
    <text x="885" y="86.500" className="font-['Liberation_Sans',sans-serif] text-[3px] font-bold">REVISION</text>
    <Tag x={877} y={501} serif>Cannot open file C:\Users</Tag>
    <path d="M920 547h-42v60h42M878 560.500h40M878 572h40M878 583.500h40M878 595.500h40" fill="#fefbf5" stroke="#4646e0" />
    <Tag x={879} y={549.5} serif fill="#22229c">Engineer</Tag>
    <Tag x={882} y={555.5} serif fill="#22229c">*</Tag>
    <Tag x={882} y={567.5} serif fill="#22229c">Title</Tag>
    <Tag x={897} y={565.5} serif fill="#22229c">RK3399_SOM</Tag>
    <Tag x={882} y={577} serif fill="#22229c">Page Contents</Tag>
    <Tag x={910} y={577} serif fill="#22229c">[11]</Tag>
    <Tag x={882} y={590.5} serif fill="#22229c">Size</Tag>
    <Tag x={882} y={600} serif fill="#22229c">Date</Tag>
  </svg>
);

const tools: { name: string; art: React.ReactNode }[] = [
  { name: 'Filter', art: <path d="M1.500 2h9L8 5.500V11H4.500V5.500z" fill="#a9dcec" /> },
  { name: 'Move', art: <path d="M6 1v10M1 6h10" stroke="#5c8ad6" strokeWidth="1.200" /> },
  { name: 'Select', art: <path d="M1.500 1.500h9v9h-9z" fill="none" stroke="#6a8fd2" strokeDasharray="1.500 1" /> },
  { name: 'Align', art: <><path d="M1.500 1v10" stroke="#8a8a8a" /><path d="M3 2.500h5v2.500H3zM3 6.500h8V9H3z" fill="#7e7e7e" /></> },
  { name: 'Part', art: <><path d="M3 1h6v10H3z" fill="#f2cf73" /><path d="M1.500 2.500H3M1.500 5H3M1.500 7.500H3M1.500 10H3M9 2.500h1.500M9 5h1.500M9 7.500h1.500M9 10h1.500" stroke="#b58a32" /></> },
  { name: 'Wire', art: <path d="M0 3h3q2 0 3 1.500T9 6h3M0 7h3q2 0 3 1.500T9 10h3" fill="none" stroke="#3f78bd" strokeWidth="1.200" /> },
  { name: 'Ground', art: <path d="M6 1v5M1 6h10M3 8h6M5 10h2" stroke="#b8433f" strokeWidth="1.200" /> },
  { name: 'Harness', art: <><path d="M0.500 1h2v10h-2z" fill="#a5c4ef" /><path d="M3 6h3M6.500 4v4M8.500 4v4M10.500 4v4M6.500 4.500h5" stroke="#4a68b0" /></> },
  { name: 'Sheet symbol', art: <><path d="M2 2.500h8v7H2z" fill="#79d39a" stroke="#3f8fd0" /><path d="M0 4h2M0 8h2M10 4h2M10 8h2" stroke="#5fa7e8" /></> },
  { name: 'Port', art: <><path d="M0 3h7l3 3-3 3H0z" fill="#f3d277" /><path d="M2 4.500v3M4.500 4.500v3M9.500 6H12" stroke="#94702a" /></> },
  { name: 'Directive', art: <><circle cx="6" cy="6" r="4.500" fill="none" stroke="#b84545" /><path d="M6 3v1.300M6 5v4M0 6h1.500" stroke="#b84545" strokeWidth="1.200" /></> },
  { name: 'Text', art: <path d="M1 11h3M7 11h4.500M2.500 11L6 1.500 9.800 11M3.800 7.500h4.500" fill="none" stroke="#5b9be8" strokeWidth="1.400" /> },
  { name: 'Arc', art: <path d="M1 10A5 5 0 1 1 11 10" fill="none" stroke="#4a78bf" strokeWidth="1.200" /> },
  { name: 'Junction', art: <><path d="M0 6h12" stroke="#b07a20" /><path d="M6 1.500L10.500 6 6 10.500 1.500 6z" fill="#f5b83c" /></> },
];

const docTabs: { label: string; icon: IconKind; width: string; active?: boolean }[] = [
  { label: 'Home Page', icon: 'home', width: 'w-[59px]', active: true },
  { label: 'RK3399_SOM_rev01_1.PcbDoc', icon: 'pcb', width: 'w-[121px]' },
  { label: '[11] - RK3399_LPDDR4.SchDoc', icon: 'sheet', width: 'w-[121px]', active: true },
  { label: 'Schlib1.SchLib *', icon: 'schlib', width: 'w-[74px]' },
  { label: 'RK399_Library_SYMBOLS.SchLib *', icon: 'schlib', width: 'w-[132px]' },
];

const EditorArea = () => (
  <main className="flex min-w-0 flex-1 flex-col bg-[#353535]">
    <div className="flex h-[17px] shrink-0 items-end gap-[2px] pl-px">
      {docTabs.map((tab) => (
        <button
          key={tab.label}
          type="button"
          className={`flex h-[15px] shrink-0 items-center gap-[3px] rounded-t-xs border border-b-0 border-[#2b2b2b] pl-[2px] font-medium whitespace-nowrap ${tab.width} ${tab.active ? 'bg-[#4a4a4a]' : 'bg-[#383838]'}`}
        >
          <TreeIcon kind={tab.icon} />
          {tab.label}
        </button>
      ))}
    </div>
    <div className="relative flex-1 overflow-hidden bg-[#e2e2e2]">
      <Schematic />
      <div className="absolute top-[2px] left-[180px] flex h-[18px] items-center rounded-xs bg-[#3d3d3d] px-[3px]">
        {tools.map((tool, i) => (
          <button key={tool.name} type="button" aria-label={tool.name} className={`flex h-full w-[19px] items-center justify-center ${i === 3 ? 'border-r border-[#2b2b2b]' : ''}`}>
            <svg viewBox="0 0 18 18" className="size-[18px]" aria-hidden="true">
              <g transform="translate(3 3)">{tool.art}</g>
              {i !== 0 && i !== 4 && <path d="M18 15v3h-3z" fill="#f2f2f2" />}
            </svg>
          </button>
        ))}
      </div>
    </div>
    <div className="flex h-[15px] shrink-0 gap-px pl-px">
      <button type="button" className="bg-[#505050] px-1 font-bold text-[#ececec]">Editor</button>
      <button type="button" className="bg-[#3b3b3b] px-1 font-medium">[11] - RK3399_LPDDR4</button>
    </div>
  </main>
);

/* ---------- explorer panel ---------- */

const folderIndent = ['pl-0', 'pl-[14px]', 'pl-[27px]'];
const toolButton = 'flex h-[14px] items-center justify-center rounded-xs border border-[#2c2c2c] bg-[#4f4f4f] text-[#ededed]';
const actionButton = 'flex h-[17px] items-center justify-center gap-1 rounded-xs border border-[#2f2f2f] bg-[#525252]';

const ChipIcon = () => (
  <svg viewBox="0 0 34 34" className="size-[34px]" aria-hidden="true">
    <g fill="none" stroke="#f0f0f0" strokeWidth="1.500">
      <rect x="6" y="6" width="22" height="22" strokeWidth="2" />
      {range(6).map((i) => (
        <path key={i} d={`M${8.5 + i * 3.4} 0.500v5M${8.5 + i * 3.4} 28.500v5M0.500 ${8.5 + i * 3.4}h5M28.500 ${8.5 + i * 3.4}h5`} />
      ))}
    </g>
  </svg>
);

const ExplorerPanel = () => (
  <aside className="relative flex w-[382px] shrink-0 flex-col bg-[#404040] font-medium">
    <PanelHeader title="Explorer" active />
    <div className="flex h-[23px] shrink-0 items-center gap-[3px] pt-px pr-[5px] pl-[11px]">
      <button type="button" className="flex w-[48px] items-center gap-[2px] font-semibold whitespace-nowrap">Dario Fresu <Caret /></button>
      <nav aria-label="Folder path" className="flex h-[14px] flex-1 items-center gap-1 rounded-xs border border-[#282828] bg-[#2e2e2e] px-[2px] font-semibold">
        <a href="#top">Top</a>
        <ChevronRight size={7} strokeWidth={4} />
        <a href="#components">Components</a>
        <ChevronRight size={7} strokeWidth={4} />
        <Search size={8} className="mr-[2px] ml-auto" color="#8e8e8e" />
      </nav>
      <button type="button" aria-label="Refresh" className={`${toolButton} w-[16px]`}>
        <svg viewBox="0 0 10 10" className="size-[8px]" fill="#dedede" aria-hidden="true">
          <path d="M3.500 0v1.500H9V4H3.500v1.500L0.500 2.700zM6.500 4.500V6H1v2.500h5.500V10l3-2.800z" />
        </svg>
      </button>
      <button type="button" aria-label="Explorer settings" className={`${toolButton} w-[18px]`}><Gear /></button>
      <div className="flex">
        <button type="button" className={`${toolButton} w-[79px] gap-[2px] font-bold whitespace-nowrap`}>
          <svg viewBox="0 0 10 10" className="size-[9px]" aria-hidden="true">
            <circle cx="5" cy="5" r="5" fill="#f4f4f4" />
            <path d="M5 2v6M2 5h6" stroke="#444" strokeWidth="1.500" />
          </svg>
          Add Component
        </button>
        <button type="button" aria-label="More add options" className={`${toolButton} w-[13px]`}><Caret /></button>
      </div>
    </div>
    <div className="flex min-h-0 flex-1 gap-[6px] pr-[5px] pl-[6px]">
      <section className="flex w-[150px] shrink-0 flex-col border-2 border-[#303030] bg-[#3b3b3b]">
        <h3 className="flex h-[13px] shrink-0 items-center justify-between border-b border-[#303030] bg-[#484848] px-[2px]">
          Server Folders
          <svg viewBox="0 0 6 4" className="h-[3px] w-[5px]" aria-hidden="true"><path d="M0 4h6L3 0z" fill="#1e1e1e" /></svg>
        </h3>
        <ul role="tree" aria-label="Server Folders" className="mt-px grid h-[448px] auto-rows-fr pl-1">
          {folderRows.map((row) => (
            <li key={row.label} role="treeitem" aria-selected={!!row.active} className={`flex items-center ${folderIndent[row.level]}`}>
              <span className="w-[10px] shrink-0"><Twisty open={row.open} dim /></span>
              <TreeIcon kind={row.icon} />
              <span className={`ml-[2px] flex h-full flex-1 items-center pl-[3px] leading-none whitespace-nowrap ${row.active ? 'bg-[#525252]' : ''}`}>{row.label}</span>
            </li>
          ))}
        </ul>
      </section>
      <section className="flex flex-1 flex-col items-center bg-[#3a3a3a] px-[28px] pt-[190px]">
        <ChipIcon />
        <h3 className="w-full pl-[5px] text-[14px] leading-[20px] font-normal text-[#dcdcdc]">No components in this folder</h3>
        <p className="mt-[5px] leading-[10px]">To populate this folder you can:</p>
        <div className="mt-[16px] flex w-[129px] flex-col gap-1">
          <button type="button" className={actionButton}><ArrowUpCircle size={10} />Import Library</button>
          <button type="button" className={actionButton}><Plus size={10} strokeWidth={3} />Create Component</button>
          <button type="button" className={actionButton}><Plus size={10} strokeWidth={3} />Create Other Item Type</button>
        </div>
        <a href="#learn" className="mt-[16px] w-full leading-[9px] text-[#7fb2dc] underline decoration-dashed underline-offset-2">Learn more about working with a Workspace Library</a>
      </section>
    </div>
    <div className="flex h-[18px] shrink-0 items-start pl-[13px]">
      <button type="button" className="h-[12px] rounded-b-xs border border-t-0 border-[#303030] bg-[#505050] px-[3px] font-semibold">Folders</button>
      <button type="button" className="h-[12px] rounded-b-xs border border-t-0 border-[#303030] bg-[#383838] px-[4px] font-semibold">Search</button>
    </div>

    {/* step callouts over the tree */}
    <svg viewBox="1018 360 100 140" className="pointer-events-none absolute top-[325px] left-[100px] h-[140px] w-[100px]" aria-hidden="true">
      <path d="M1026 407.500l26-15v9.500h60v11.500h-60v9.500z" fill="#ff3131" />
      <path d="M1018 437l28-9-2 9 57 11.500-2 11.500-57-12-2 8z" fill="#ff3131" />
      <g fill="#fff" className="font-['Roboto',sans-serif] text-[33px] font-black">
        <text x="1081" y="392">1</text>
        <text x="1089" y="491">2</text>
      </g>
    </svg>
  </aside>
);

const StatusBar = () => (
  <footer className="flex h-[26px] shrink-0 justify-between overflow-hidden border-t border-[#353535] bg-[#404040]">
    <div className="flex flex-col gap-[5px] pt-1 pl-[2px] leading-[9px]">
      <p className="flex gap-2"><span>X:3100.000mil Y:9450.000mil</span><span>Grid:50mil</span></p>
      <p>Idle state - ready for command</p>
    </div>
    <button type="button" className="mt-[2px] mr-px h-[13px] rounded-xs border border-[#2e2e2e] bg-[#505050] px-[3px] font-semibold">Panels</button>
  </footer>
);

const App: React.FC = () => (
  <div className="flex h-screen flex-col overflow-hidden bg-[#353535] font-['Noto_Sans',sans-serif] text-[7px] text-[#d0d0d0]">
    <TitleBar />
    <MenuBar />
    <div className="flex min-h-0 flex-1 gap-1">
      <ProjectsPanel />
      <EditorArea />
      <ExplorerPanel />
    </div>
    <StatusBar />
  </div>
);

export default App;
